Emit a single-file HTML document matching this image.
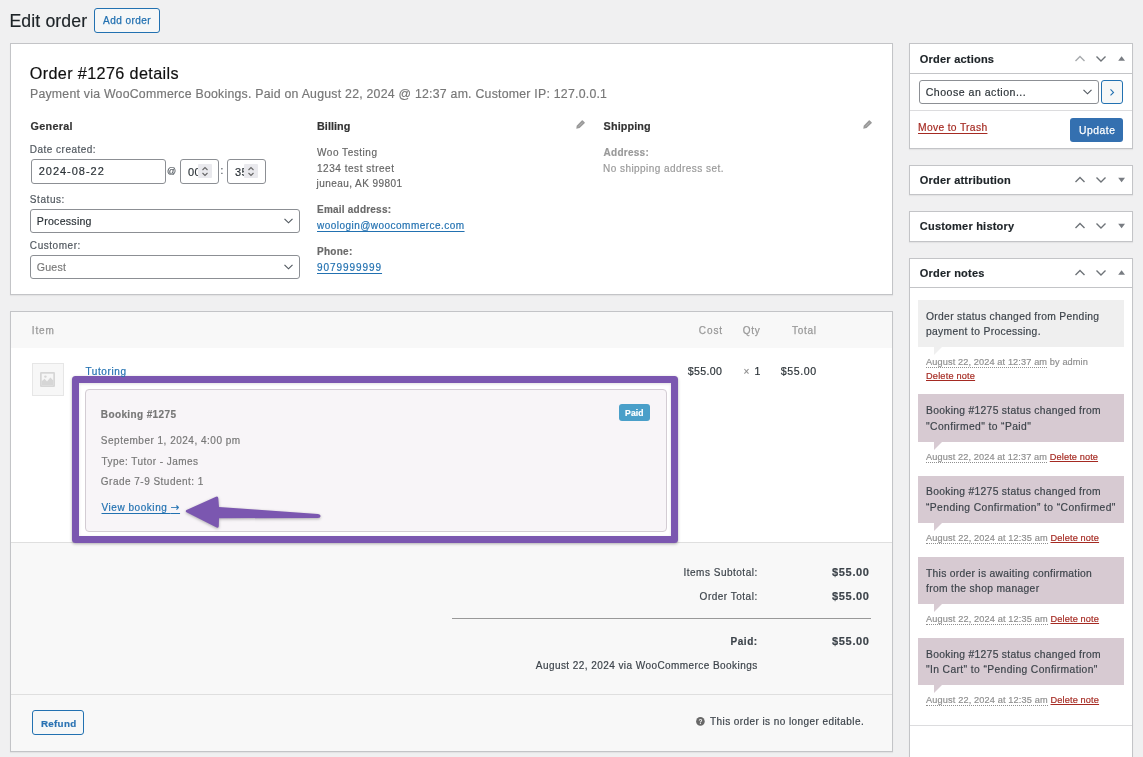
<!DOCTYPE html>
<html lang="en"><head><meta charset="utf-8"><title>Edit order</title>
<style>
*{box-sizing:border-box;margin:0;padding:0}
html,body{width:1143px;height:757px;overflow:hidden;background:#f0f0f1;font-family:"Liberation Sans",Arial,sans-serif;color:#3c434a;font-size:10px}
.a{position:absolute}
.t{position:absolute;white-space:nowrap;-webkit-text-stroke:0.18px}
.panel{position:absolute;background:#fff;border:1px solid #c3c4c7;box-shadow:0 1px 1px rgba(0,0,0,.05)}
.inp{position:absolute;background:#fff;border:1px solid #8c8f94;border-radius:3px}
.note{position:absolute;left:918px;width:206px;background:#d7cad2}
.note:after{content:"";position:absolute;left:16px;bottom:-8px;border-style:solid;border-width:8px 8px 0 0;border-color:#d7cad2 transparent transparent transparent}
.note.sys{background:#efefef}
.note.sys:after{border-color:#efefef transparent transparent transparent}
</style></head><body>

<!-- heading -->
<div class="a" id="addbtn" style="left:94px;top:8px;width:66px;height:25px;border:1px solid #2271b1;border-radius:3px;background:#f6f7f7"></div>

<!-- order data panel -->
<div class="panel" id="p1" style="left:10px;top:43px;width:883px;height:252px"></div>
<div class="inp" id="datei" style="left:31px;top:159px;width:135px;height:25px"></div>
<div class="inp" id="hri" style="left:180px;top:159px;width:39px;height:25px"></div>
<div class="a" style="left:187.5px;top:165px;font-size:11px;line-height:15px;color:#2c3338;width:10.5px;overflow:hidden;white-space:nowrap;letter-spacing:.5px;will-change:transform;-webkit-text-stroke:0.18px">00</div>
<div class="a" style="left:198px;top:164px;width:14px;height:14px;background:#e9e9ed;border-radius:1px"></div>
<svg class="a" style="left:201px;top:165.500px" width="8" height="11" viewBox="0 0 8 11"><path d="M1.5 4 L4 1.5 L6.500 4 M1.5 7 L4 9.5 L6.500 7" fill="none" stroke="#666" stroke-width="1.1"/></svg>
<div class="inp" id="mni" style="left:227px;top:159px;width:39px;height:25px"></div>
<div class="a" style="left:234.500px;top:165px;font-size:11px;line-height:15px;color:#2c3338;width:9.300px;overflow:hidden;white-space:nowrap;letter-spacing:.5px;will-change:transform;-webkit-text-stroke:0.18px">35</div>
<div class="a" style="left:244px;top:164px;width:14px;height:14px;background:#e9e9ed;border-radius:1px"></div>
<svg class="a" style="left:247px;top:165.500px" width="8" height="11" viewBox="0 0 8 11"><path d="M1.5 4 L4 1.5 L6.500 4 M1.5 7 L4 9.5 L6.500 7" fill="none" stroke="#666" stroke-width="1.1"/></svg>

<div class="inp" id="sts" style="left:30px;top:209px;width:270px;height:24px"></div>
<svg class="a" style="left:283px;top:217px" width="11" height="8" viewBox="0 0 11 8"><path d="M1.5 1.8 L5.5 5.8 L9.5 1.8" fill="none" stroke="#50575e" stroke-width="1.15"/></svg>
<div class="inp" id="cus" style="left:30px;top:255px;width:270px;height:24px"></div>
<svg class="a" style="left:283px;top:263px" width="11" height="8" viewBox="0 0 11 8"><path d="M1.5 1.8 L5.5 5.8 L9.5 1.8" fill="none" stroke="#50575e" stroke-width="1.15"/></svg>

<!-- pencils -->
<svg class="a" style="left:576px;top:119.700px" width="9.500" height="9" viewBox="0 0 9.500 9"><path d="M0.3 8.800 L0.7 5.800 L5.800 0.5 Q6.300 0 6.800 0.500 L8.600 2.200 Q9.100 2.700 8.600 3.200 L3.600 8.100 Z" fill="#999"/><path d="M2.700 6.500 L6.700 2.500" stroke="#b8b8b8" stroke-width="0.9"/></svg>
<svg class="a" style="left:862.600px;top:119.700px" width="9.500" height="9" viewBox="0 0 9.500 9"><path d="M0.3 8.800 L0.7 5.800 L5.800 0.5 Q6.300 0 6.800 0.500 L8.600 2.200 Q9.100 2.700 8.600 3.200 L3.600 8.100 Z" fill="#999"/><path d="M2.700 6.500 L6.700 2.500" stroke="#b8b8b8" stroke-width="0.9"/></svg>

<!-- items panel -->
<div class="panel" id="p2" style="left:10px;top:311px;width:883px;height:441px;background:#f8f8f8"></div>
<div class="a" id="rowwhite" style="left:11px;top:348px;width:881px;height:194px;background:#fff"></div>
<div class="a" style="left:11px;top:542px;width:881px;height:1px;background:#dfdfdf"></div>
<div class="a" style="left:11px;top:694px;width:881px;height:1px;background:#dfdfdf"></div>

<div class="a" id="thumb" style="left:32px;top:363px;width:32px;height:33px;background:#f7f7f7;border:1px solid #e6e6e6"></div>
<svg class="a" style="left:40.4px;top:372px" width="15" height="15" viewBox="0 0 15 15"><rect x="0" y="0" width="15" height="15" rx="1.2" fill="#d6d6d6"/><rect x="1.7" y="1.7" width="11.6" height="11.6" fill="#f6f6f6"/><path d="M1.7 13.3 L1.7 9.3 L4.6 6.8 L7 9.6 L10.4 5.6 L13.3 8.6 L13.3 13.3 Z" fill="#d6d6d6"/><circle cx="5.4" cy="4.6" r="1.2" fill="#d6d6d6"/></svg>

<!-- purple highlight -->
<div class="a" id="purp" style="left:72px;top:376px;width:606px;height:166.500px;border:7px solid #7b57b0;border-radius:3.5px;background:#fff;box-shadow:0 1px 3px rgba(0,0,0,.3),inset 0 1px 3px rgba(0,0,0,.12)"></div>
<div class="a" id="bk" style="left:85px;top:389px;width:582px;height:142.500px;border:1px solid #d3ccd3;border-radius:4px;background:#f8f5f8"></div>
<div class="a" id="paid" style="left:619px;top:404px;width:31px;height:17px;background:#4a9fc9;border-radius:3px"></div>
<svg class="a" id="arrow" style="left:184px;top:493px;filter:drop-shadow(0 1px 1.5px rgba(0,0,0,.3))" width="140" height="38" viewBox="0 0 140 38"><path d="M2.5 17 L32 3.8 Q34.2 3 34.3 5.3 L35 14 L134 21 Q136.6 21.3 136.6 23.1 Q136.6 25 134 25 L35 25.2 L34.8 33 Q34.8 35.5 32.6 34.5 L2.5 19.3 Q1 18.2 2.5 17 Z" fill="#7b57b0"/></svg>

<!-- totals -->
<div class="a" style="left:452px;top:618px;width:419px;height:1px;background:#999"></div>
<div class="a" id="refb" style="left:32px;top:710px;width:52px;height:25px;border:1px solid #2271b1;border-radius:3px;background:#f6f7f7"></div>
<svg class="a" style="left:696.200px;top:717.200px;will-change:transform" width="9" height="9" viewBox="0 0 9 9"><circle cx="4.400" cy="4.400" r="4.300" fill="#686868"/><text x="4.400" y="6.900" font-size="6.500" font-weight="700" text-anchor="middle" fill="#f8f8f8" font-family="Liberation Sans, sans-serif">?</text></svg>

<!-- sidebar -->
<div class="panel" id="s1" style="left:909px;top:43px;width:224px;height:106px"></div>
<div class="a" style="left:910px;top:73px;width:222px;height:1px;background:#c3c4c7"></div>
<div class="a" style="left:910px;top:110px;width:222px;height:1px;background:#dcdcde"></div>
<div class="inp" id="acts" style="left:919px;top:80px;width:180px;height:24px"></div>
<svg class="a" style="left:1082px;top:88px" width="11" height="8" viewBox="0 0 11 8"><path d="M1.5 1.800 L5.500 5.800 L9.500 1.800" fill="none" stroke="#50575e" stroke-width="1.15"/></svg>
<div class="a" id="gob" style="left:1101px;top:80px;width:22px;height:24px;border:1px solid #2271b1;border-radius:3px;background:#f6f7f7"></div>
<svg class="a" style="left:1108px;top:87px" width="8" height="10" viewBox="0 0 8 10"><path d="M2.500 2.400 L5.500 5.400 L2.500 8.400" fill="none" stroke="#2271b1" stroke-width="1.1"/></svg>
<div class="a" id="upd" style="left:1070px;top:118px;width:53px;height:24px;background:#3470b0;border-radius:3px"></div>

<div class="panel" id="s2" style="left:909px;top:165px;width:224px;height:30px"></div>
<div class="panel" id="s3" style="left:909px;top:211px;width:224px;height:31px"></div>
<div class="panel" id="s4" style="left:909px;top:258px;width:224px;height:520px"></div>
<div class="a" style="left:910px;top:287px;width:222px;height:1px;background:#c3c4c7"></div>
<div class="a" style="left:910px;top:725px;width:222px;height:1px;background:#dcdcde"></div>

<!-- handle icons -->
<svg class="a" style="left:1073px;top:53px" width="60" height="12" viewBox="0 0 60 12"><path d="M2.5 8 L7 3.5 L11.5 8" fill="none" stroke="#a7aaad" stroke-width="1.4"/><path d="M23.5 3.5 L28 8 L32.5 3.5" fill="none" stroke="#6e7378" stroke-width="1.4"/><path d="M45.2 7.8 L48.6 3.3 L52 7.8 Z" fill="#787c82"/></svg>
<svg class="a" style="left:1073px;top:174px" width="60" height="12" viewBox="0 0 60 12"><path d="M2.5 8 L7 3.5 L11.5 8" fill="none" stroke="#6e7378" stroke-width="1.4"/><path d="M23.5 3.5 L28 8 L32.5 3.5" fill="none" stroke="#6e7378" stroke-width="1.4"/><path d="M45.2 3.8 L48.6 8.3 L52 3.8 Z" fill="#787c82"/></svg>
<svg class="a" style="left:1073px;top:220px" width="60" height="12" viewBox="0 0 60 12"><path d="M2.5 8 L7 3.5 L11.5 8" fill="none" stroke="#6e7378" stroke-width="1.4"/><path d="M23.5 3.5 L28 8 L32.5 3.5" fill="none" stroke="#6e7378" stroke-width="1.4"/><path d="M45.2 3.8 L48.6 8.3 L52 3.8 Z" fill="#787c82"/></svg>
<svg class="a" style="left:1073px;top:267px" width="60" height="12" viewBox="0 0 60 12"><path d="M2.5 8 L7 3.5 L11.5 8" fill="none" stroke="#6e7378" stroke-width="1.4"/><path d="M23.5 3.5 L28 8 L32.5 3.5" fill="none" stroke="#6e7378" stroke-width="1.4"/><path d="M45.2 7.8 L48.6 3.3 L52 7.8 Z" fill="#787c82"/></svg>

<!-- notes -->
<div class="note sys" id="n1" style="top:300px;height:47px"></div>
<div class="note" id="n2" style="top:394px;height:48px"></div>
<div class="note" id="n3" style="top:476px;height:47px"></div>
<div class="note" id="n4" style="top:557px;height:47px"></div>
<div class="note" id="n5" style="top:638px;height:47px"></div>

<div id="txt" style="position:absolute;left:0;top:0;width:1143px;height:757px;will-change:transform">
<div class="t" id="h1" style="left:9.42px;top:11px;font-size:17.7px;line-height:20px;color:#1d2327;letter-spacing:0.120px">Edit order</div>
<div class="t" id="addtxt" style="left:103.00px;top:15px;font-size:10px;line-height:11px;color:#2271b1;letter-spacing:0.460px;-webkit-text-stroke:0.25px #2271b1">Add order</div>
<div class="t" id="ordh" style="left:29.68px;top:64px;font-size:16.2px;line-height:18px;color:#111;letter-spacing:0.374px">Order #1276 details</div>
<div class="t" id="paym" style="left:29.96px;top:87px;font-size:12.3px;line-height:14px;color:#777;letter-spacing:0.242px">Payment via WooCommerce Bookings. Paid on August 22, 2024 @ 12:37 am. Customer IP: 127.0.0.1</div>
<div class="t" id="gen" style="left:30.50px;top:120px;font-size:10.8px;line-height:12px;color:#333;font-weight:700;letter-spacing:0.310px">General</div>
<div class="t" id="dcl" style="left:29.86px;top:144px;font-size:10px;line-height:11px;color:#50575e;letter-spacing:0.471px">Date created:</div>
<div class="t" id="datet" style="left:38.70px;top:165px;font-size:11px;line-height:12px;color:#2c3338;letter-spacing:0.980px">2024-08-22</div>
<div class="t" id="att" style="left:166.90px;top:166px;font-size:9px;line-height:10px;color:#50575e">@</div>
<div class="t" id="col" style="left:220.50px;top:165px;font-size:10px;line-height:11px;color:#50575e">:</div>
<div class="t" id="stl" style="left:29.86px;top:194px;font-size:10px;line-height:11px;color:#50575e;letter-spacing:0.560px">Status:</div>
<div class="t" id="stt" style="left:36.86px;top:215px;font-size:10.6px;line-height:12px;color:#2c3338;letter-spacing:0.250px">Processing</div>
<div class="t" id="cul" style="left:29.86px;top:240px;font-size:10px;line-height:11px;color:#50575e;letter-spacing:0.547px">Customer:</div>
<div class="t" id="cut" style="left:36.86px;top:261px;font-size:10.6px;line-height:12px;color:#7a7a7a;letter-spacing:0.186px">Guest</div>
<div class="t" id="bil" style="left:317.00px;top:120px;font-size:10.8px;line-height:12px;color:#333;font-weight:700;letter-spacing:0.055px">Billing</div>
<div class="t" id="ba1" style="left:317.00px;top:147px;font-size:10px;line-height:11px;color:#666;letter-spacing:0.533px">Woo Testing</div>
<div class="t" id="ba2" style="left:317.00px;top:163px;font-size:10px;line-height:11px;color:#666;letter-spacing:0.537px">1234 test street</div>
<div class="t" id="ba3" style="left:316.50px;top:178px;font-size:10px;line-height:11px;color:#666;letter-spacing:0.442px">juneau, AK 99801</div>
<div class="t" id="eml" style="left:317.00px;top:204px;font-size:10px;line-height:11px;color:#6a6a6a;font-weight:700;letter-spacing:0.219px">Email address:</div>
<div class="t" id="emv" style="left:317.00px;top:220px;font-size:10px;line-height:11px;color:#2271b1;letter-spacing:0.468px;text-decoration:underline;text-underline-offset:2.3px">woologin@woocommerce.com</div>
<div class="t" id="phl" style="left:317.00px;top:246px;font-size:10px;line-height:11px;color:#6a6a6a;font-weight:700;letter-spacing:0.272px">Phone:</div>
<div class="t" id="phv" style="left:317.00px;top:262px;font-size:10px;line-height:11px;color:#2271b1;letter-spacing:0.942px;text-decoration:underline;text-underline-offset:2.3px">9079999999</div>
<div class="t" id="shp" style="left:603.60px;top:120px;font-size:10.8px;line-height:12px;color:#333;font-weight:700;letter-spacing:0.128px">Shipping</div>
<div class="t" id="sad" style="left:603.60px;top:147px;font-size:10px;line-height:11px;color:#999;font-weight:700;letter-spacing:0.263px">Address:</div>
<div class="t" id="sno" style="left:603.04px;top:163px;font-size:10px;line-height:11px;color:#999;letter-spacing:0.449px">No shipping address set.</div>
<div class="t" id="thi" style="left:31.80px;top:325px;font-size:10px;line-height:11px;color:#999;letter-spacing:0.849px;-webkit-text-stroke:0.25px #999">Item</div>
<div class="t" id="thc" style="left:698.86px;top:325px;font-size:10px;line-height:11px;color:#999;letter-spacing:0.896px;-webkit-text-stroke:0.25px #999">Cost</div>
<div class="t" id="thq" style="left:742.80px;top:325px;font-size:10px;line-height:11px;color:#999;letter-spacing:0.719px;-webkit-text-stroke:0.25px #999">Qty</div>
<div class="t" id="tht" style="left:792.00px;top:325px;font-size:10px;line-height:11px;color:#999;letter-spacing:0.719px;-webkit-text-stroke:0.25px #999">Total</div>
<div class="t" id="tut" style="left:85.50px;top:366px;font-size:10px;line-height:11px;color:#2271b1;letter-spacing:0.596px">Tutoring</div>
<div class="t" id="c1" style="left:687.80px;top:365px;font-size:10.6px;line-height:12px;color:#2c3338;letter-spacing:0.331px">$55.00</div>
<div class="t" id="q1a" style="left:743.50px;top:366px;font-size:10px;line-height:11px;color:#888">×</div>
<div class="t" id="q1b" style="left:754.50px;top:365px;font-size:10.6px;line-height:12px;color:#2c3338">1</div>
<div class="t" id="t1" style="left:780.80px;top:365px;font-size:10.6px;line-height:12px;color:#2c3338;letter-spacing:0.571px">$55.00</div>
<div class="t" id="bkh" style="left:100.86px;top:409px;font-size:10px;line-height:11px;color:#777;font-weight:700;letter-spacing:0.376px">Booking #1275</div>
<div class="t" id="paidt" style="left:625.04px;top:408px;font-size:8.6px;line-height:10px;color:#fff;font-weight:700;letter-spacing:0.135px">Paid</div>
<div class="t" id="bk1" style="left:100.86px;top:435px;font-size:10px;line-height:11px;color:#777;letter-spacing:0.500px">September 1, 2024, 4:00 pm</div>
<div class="t" id="bk2" style="left:101.50px;top:456px;font-size:10px;line-height:11px;color:#777;letter-spacing:0.449px">Type: Tutor - James</div>
<div class="t" id="bk3" style="left:100.86px;top:476px;font-size:10px;line-height:11px;color:#777;letter-spacing:0.479px">Grade 7-9 Student: 1</div>
<div class="t" id="bk4" style="left:101.50px;top:502px;font-size:10px;line-height:11px;color:#2271b1;letter-spacing:0.546px;text-decoration:underline;text-underline-offset:2.3px">View booking <span style="font-family:DejaVu Sans,sans-serif;font-size:10.5px;line-height:1px">→</span></div>
<div class="t" id="its" style="right:385.30px;top:567px;font-size:10px;line-height:11px;color:#3c434a;letter-spacing:0.500px">Items Subtotal:</div>
<div class="t" id="itv" style="right:273.39px;top:566px;font-size:11px;line-height:12px;color:#3c434a;font-weight:700;letter-spacing:0.649px">$55.00</div>
<div class="t" id="ots" style="right:385.30px;top:591px;font-size:10px;line-height:11px;color:#3c434a;letter-spacing:0.503px">Order Total:</div>
<div class="t" id="otv" style="right:273.39px;top:590px;font-size:11px;line-height:12px;color:#3c434a;font-weight:700;letter-spacing:0.649px">$55.00</div>
<div class="t" id="pds" style="right:385.24px;top:636px;font-size:10px;line-height:11px;color:#3c434a;font-weight:700;letter-spacing:0.562px">Paid:</div>
<div class="t" id="pdv" style="right:273.39px;top:635px;font-size:11px;line-height:12px;color:#3c434a;font-weight:700;letter-spacing:0.649px">$55.00</div>
<div class="t" id="via" style="right:385.36px;top:660px;font-size:10px;line-height:11px;color:#3c434a;letter-spacing:0.437px">August 22, 2024 via WooCommerce Bookings</div>
<div class="t" id="reft" style="left:40.90px;top:718px;font-size:9.8px;line-height:11px;color:#2b73b3;font-weight:700;letter-spacing:0.306px">Refund</div>
<div class="t" id="noed" style="right:278.89px;top:716px;font-size:10px;line-height:11px;color:#3c434a;letter-spacing:0.426px">This order is no longer editable.</div>
<div class="t" id="sh1" style="left:919.80px;top:53px;font-size:11px;line-height:12px;color:#1d2327;font-weight:700;letter-spacing:0.222px">Order actions</div>
<div class="t" id="actt" style="left:925.68px;top:86px;font-size:10.6px;line-height:12px;color:#2c3338;letter-spacing:0.487px">Choose an action...</div>
<div class="t" id="trash" style="left:918.00px;top:122px;font-size:10.3px;line-height:11px;color:#a52a22;letter-spacing:0.323px;text-decoration:underline;text-underline-offset:2.3px">Move to Trash</div>
<div class="t" id="updt" style="left:1079.00px;top:125px;font-size:10.3px;line-height:11px;color:#fff;letter-spacing:0.542px;-webkit-text-stroke:0.25px #fff">Update</div>
<div class="t" id="sh2" style="left:919.80px;top:174px;font-size:11px;line-height:12px;color:#1d2327;font-weight:700;letter-spacing:0.220px">Order attribution</div>
<div class="t" id="sh3" style="left:919.80px;top:220px;font-size:11px;line-height:12px;color:#1d2327;font-weight:700;letter-spacing:0.220px">Customer history</div>
<div class="t" id="sh4" style="left:919.80px;top:267px;font-size:11px;line-height:12px;color:#1d2327;font-weight:700;letter-spacing:0.220px">Order notes</div>
<div class="t" id="n1a" style="left:926.00px;top:311px;font-size:10.3px;line-height:11px;color:#3c434a;letter-spacing:0.309px">Order status changed from Pending</div>
<div class="t" id="n1b" style="left:926.00px;top:326px;font-size:10.3px;line-height:11px;color:#3c434a;letter-spacing:0.330px">payment to Processing.</div>
<div class="t" id="n2a" style="left:926.00px;top:405px;font-size:10.3px;line-height:11px;color:#3c434a;letter-spacing:0.305px">Booking #1275 status changed from</div>
<div class="t" id="n2b" style="left:926.00px;top:421px;font-size:10.3px;line-height:11px;color:#3c434a;letter-spacing:0.400px">"Confirmed" to “Paid"</div>
<div class="t" id="n3a" style="left:926.00px;top:486px;font-size:10.3px;line-height:11px;color:#3c434a;letter-spacing:0.305px">Booking #1275 status changed from</div>
<div class="t" id="n3b" style="left:926.00px;top:502px;font-size:10.3px;line-height:11px;color:#3c434a;letter-spacing:0.407px">“Pending Confirmation” to “Confirmed"</div>
<div class="t" id="n4a" style="left:926.00px;top:568px;font-size:10.3px;line-height:11px;color:#3c434a;letter-spacing:0.282px">This order is awaiting confirmation</div>
<div class="t" id="n4b" style="left:926.00px;top:583px;font-size:10.3px;line-height:11px;color:#3c434a;letter-spacing:0.330px">from the shop manager</div>
<div class="t" id="n5a" style="left:926.00px;top:649px;font-size:10.3px;line-height:11px;color:#3c434a;letter-spacing:0.305px">Booking #1275 status changed from</div>
<div class="t" id="n5b" style="left:926.00px;top:664px;font-size:10.3px;line-height:11px;color:#3c434a;letter-spacing:0.376px">"In Cart" to “Pending Confirmation"</div>
<div class="t" id="m1" style="left:926.00px;top:357px;font-size:9.2px;line-height:10px;color:#8f8f8f;letter-spacing:0.116px"><span style="border-bottom:1px dotted #8f8f8f">August 22, 2024 at 12:37 am</span> by admin</div>
<div class="t" id="m1b" style="left:926.00px;top:371px;font-size:9.2px;line-height:10px;color:#8f8f8f;letter-spacing:0.192px"><span style="color:#a52a22;text-decoration:underline;text-underline-offset:1.2px">Delete note</span></div>
<div class="t" id="m2" style="left:926.00px;top:452px;font-size:9.2px;line-height:10px;color:#8f8f8f;letter-spacing:0.115px"><span style="border-bottom:1px dotted #8f8f8f">August 22, 2024 at 12:37 am</span> <span style="color:#a52a22;text-decoration:underline;text-underline-offset:1.2px">Delete note</span></div>
<div class="t" id="m3" style="left:926.00px;top:533px;font-size:9.2px;line-height:10px;color:#8f8f8f;letter-spacing:0.141px"><span style="border-bottom:1px dotted #8f8f8f">August 22, 2024 at 12:35 am</span> <span style="color:#a52a22;text-decoration:underline;text-underline-offset:1.2px">Delete note</span></div>
<div class="t" id="m4" style="left:926.00px;top:614px;font-size:9.2px;line-height:10px;color:#8f8f8f;letter-spacing:0.141px"><span style="border-bottom:1px dotted #8f8f8f">August 22, 2024 at 12:35 am</span> <span style="color:#a52a22;text-decoration:underline;text-underline-offset:1.2px">Delete note</span></div>
<div class="t" id="m5" style="left:926.00px;top:695px;font-size:9.2px;line-height:10px;color:#8f8f8f;letter-spacing:0.141px"><span style="border-bottom:1px dotted #8f8f8f">August 22, 2024 at 12:35 am</span> <span style="color:#a52a22;text-decoration:underline;text-underline-offset:1.2px">Delete note</span></div>
</div>
</body></html>
